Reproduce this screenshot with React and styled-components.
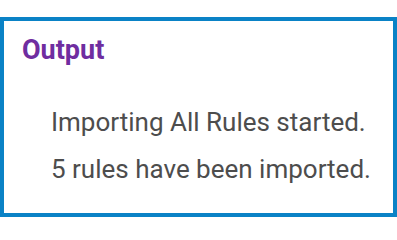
import React from "react";
import styled, { createGlobalStyle } from "styled-components";

const Global = createGlobalStyle`
  html, body {
    margin: 0;
    padding: 0;
    background: #ffffff;
  }
  body {
    font-family: Roboto, "Liberation Sans", sans-serif;
  }
`;

function App() {
  return (
    <>
      <Global />
      <Panel.Wrapper>
        <Panel.Title>Output</Panel.Title>
        <Panel.Body>
          <Panel.Line>Importing All Rules started.</Panel.Line>
          <Panel.Line>5 rules have been imported.</Panel.Line>
        </Panel.Body>
      </Panel.Wrapper>
    </>
  );
}

const Panel = {
  Wrapper: styled.div`
    box-sizing: border-box;
    margin-top: 17px;
    height: 200px;
    width: 397px;
    border: 4px solid #0a82c6;
    background-color: #ffffff;
    padding: 13px 18px 0 18px;
  `,

  Title: styled.h2`
    margin: 0;
    font-size: 27px;
    font-weight: 700;
    line-height: 32px;
    color: #6f2da0;
  `,

  Body: styled.div`
    display: flex;
    flex-direction: column;
    gap: 17px;
    margin-top: 41px;
    padding-left: 29px;
  `,

  Line: styled.p`
    margin: 0;
    font-size: 26px;
    line-height: 30px;
    color: #4d4d4d;
  `
};

export default App;
